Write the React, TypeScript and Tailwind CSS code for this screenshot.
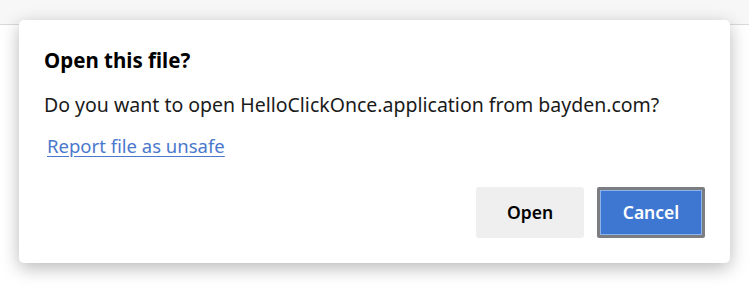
import React from 'react';

const font = { fontFamily: '"Noto Sans", "Open Sans", Arial, sans-serif' };

const App: React.FC = () => {
  return (
    <div className="relative w-full h-[288px] bg-white overflow-hidden" style={font}>
      {/* page behind the dialog */}
      <div className="h-[25px] bg-[#f7f7f7] border-b border-[#d9d9d9]" />

      {/* dialog */}
      <div className="absolute left-[19px] top-[20px] w-[711px] h-[243px] bg-white rounded-[5px] shadow-[0_5px_18px_rgba(0,0,0,0.28)] flex flex-col px-[25px] pt-[26px] pb-[25px]">
        <h1 className="text-[20.5px] leading-[28px] font-bold text-black">Open this file?</h1>
        <p className="mt-[17px] text-[19.5px] leading-[28px] text-[#1a1a1a]">
          Do you want to open HelloClickOnce.application from bayden.com?
        </p>
        <a href="#" className="mt-[13px] ml-[3px] self-start text-[18.5px] leading-[28px] text-[#4a78cc] underline underline-offset-[3px]">
          Report file as unsafe
        </a>
        <div className="mt-auto flex justify-end gap-[13px]">
          <button className="w-[108px] h-[51px] rounded-[3px] bg-[#efefef] text-[17.5px] font-semibold text-black">
            Open
          </button>
          <button className="w-[108px] h-[51px] rounded-[2px] border-[3px] border-[#7b7d80] bg-[#3d77d2] text-[17.5px] font-semibold text-white">
            <span className="flex h-full w-full items-center justify-center border border-[#8db3ec]">Cancel</span>
          </button>
        </div>
      </div>
    </div>
  );
};

export default App;
